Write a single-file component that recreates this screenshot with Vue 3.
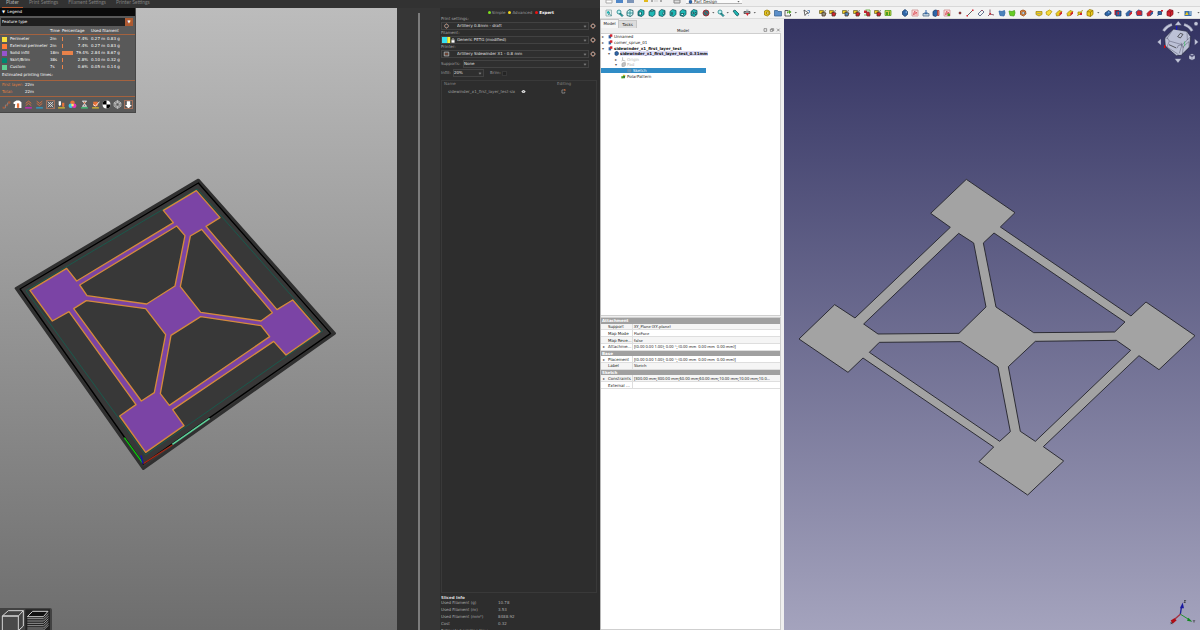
<script setup>
const tabs = ['Plater', 'Print Settings', 'Filament Settings', 'Printer Settings']
const features = [
  { name: 'Perimeter', color: '#f8e03c', time: '2m', share: 7.4, m: '0.27 m', g: '0.83 g' },
  { name: 'External perimeter', color: '#ff7d38', time: '2m', share: 7.4, m: '0.27 m', g: '0.83 g' },
  { name: 'Solid infill', color: '#9654cc', time: '18m', share: 79.4, m: '2.84 m', g: '8.67 g' },
  { name: 'Skirt/Brim', color: '#00876e', time: '38s', share: 2.8, m: '0.10 m', g: '0.32 g' },
  { name: 'Custom', color: '#5ed194', time: '7s', share: 0.6, m: '0.05 m', g: '0.14 g' },
]
const sliced = [
  ['Used Filament (g)', '10.78'],
  ['Used Filament (m)', '3.53'],
  ['Used Filament (mm³)', '8488.92'],
  ['Cost', '0.32'],
  ['Estimated printing time:', ''],
]
const presets = [
  { id: 'print', label: 'Print settings:', value: 'Artillery 0.8mm - draft', kind: 'gear' },
  { id: 'filament', label: 'Filament:', value: 'Generic PETG (modified)', kind: 'spool' },
  { id: 'printer', label: 'Printer:', value: 'Artillery Sidewinder X1 - 0.8 mm', kind: 'printer' },
]

/* Icon layers: [path, fill, stroke], on a 16 x 16 grid. */
const O = '#e8733a'
const legendIcons = [
  { n: 'Travel', p: [['M2 14h4V9h4V5h4', 'none', '#8c8c8c'], ['M1 12h4v3H1z M11 2h4v4h-4z M7 8h3v3H7z', '#a85a3a']] },
  { n: 'Wipe', p: [['M1 4l5-3h5l4 3v10H3l1-7H1z', '#fff'], ['M7 6h4v8H7z', O]] },
  { n: 'Retractions', p: [['M3 6l5-4 5 4M3 10l5-4 5 4', 'none', O], ['M2 13h12v2H2z', '#e01fd0']] },
  { n: 'Deretractions', p: [['M3 2l5 4 5-4M3 6l5 4 5-4', 'none', O], ['M2 13h12v2H2z', '#28a8d8']] },
  { n: 'Seams', on: true, p: [['M3 3l10 10M13 3L3 13M8 4l4 4-4 4-4-4z', 'none', '#ddd']] },
  { n: 'Tool changes', p: [['M3 2h4v6l-2 3-2-3z', '#fff'], ['M9 5h4v6l-2 2-2-2z', O], ['M2 13h12v2H2z', '#e8c528']] },
  { n: 'Color changes', p: [['M8 1a4 4 0 1 1 0 8 4 4 0 1 1 0-8z', O], ['M5 6a4 4 0 1 1 0 8 4 4 0 1 1 0-8z', '#37c5e8'], ['M11 6a4 4 0 1 1 0 8 4 4 0 1 1 0-8z', '#e838b8'], ['M6 7h4v4H6z', '#f5ec6a']] },
  { n: 'Print pauses', p: [['M4 2h8M4 11h8M5 2l6 9M11 2l-6 9', 'none', '#fff'], ['M6 4h4l-2 3z', O], ['M2 13h12v2H2z', '#3ddb7c']] },
  { n: 'Custom G-codes', p: [['M4 3h8v8H4z', O], ['M4 8l4 3 7-8', 'none', '#fff'], ['M2 13h12v2H2z', '#e8c528']] },
  { n: 'Center of gravity', p: [['M8 1a7 7 0 1 1 0 14A7 7 0 1 1 8 1z', '#fff'], ['M8 1v7H1a7 7 0 0 1 7-7zM8 15V8h7a7 7 0 0 1-7 7z', '#000']] },
  { n: 'Shells', p: [['M8 1l6 4v6l-6 4-6-4V5zM8 1v4M2 5l3 2M14 5l-3 2M8 15v-4M5 5h6v6H5z', 'none', '#ccc']] },
  { n: 'Tool marker', on: true, p: [['M5 2h6v7h3l-6 6-6-6h3z', '#fff']] },
]

const T = '#1fb8b5', D = '#0d4f55', R = '#d1232f', Y = '#ecc91f', B = '#2f66a8', G = '#49a01c'
const box = 'M2 5l5-4 7 2v8l-5 4-7-2z'
const view = extra => [[box, T, D], [extra, '#d9ffff', D]]
const solid = (c, s) => [[box, c, s], ['M2 5l7 1 5-3M9 6v9', 'none', s]]
const lens = [['M6 2a4 4 0 1 1 0 8 4 4 0 1 1 0-8z', '#bdf1f1', '#137b80'], ['M9 8l5 5-2 2-5-5z', T, D]]
const sketch = c => [['M1 3h8v6H1z', Y, '#6d6a3a'], ['M6 6l8 2-2 6H6z', c, '#4d3420'], ['M10 5l4-2', 'none', '#555']]
const paper = c => [['M2 2h12v12H2z', '#fbdede', '#c98a8a'], ['M5 11l2-6 5 3z', 'none', R], ['M9 9h5v5H9z', c]]
const slant = (a, b, s) => [['M2 9l6-6 6 2-5 8-6 1z', a, s], ['M9 8l5-3v4l-5 5z', b]]
const toolGroups = [
  { w: 93, gap: 4, icons: [
    [['M2 2h11v12H2z', '#e3eeee', '#8aa5a5'], ['M6 5a3 3 0 1 1 0 6M9 10l4 4', 'none', '#137b80'], ['M4 5h4v4H4z', T]], lens,
    [[box, '#d0f6f5', D], ['M8 1v14M2 8h12', 'none', '#137b80']], view('M4 6h5v6H4z'), view('M4 4l4-2 4 1-4 2z'),
    view('M10 7l3-2v5l-3 2z'), view('M5 7h2v4H5z'), view('M4 9h6l-2 4H4z'), view('M4 6h3v4H4z M10 7h2v4h-2z')] },
  { w: 27, gap: 3, icons: [[['M8 2a6 6 0 1 1 0 12A6 6 0 1 1 8 2z', '#2f7176', '#a51520'], ['M4 4l8 8', 'none', R]], 0, lens, 0] },
  { w: 24, gap: 7, icons: [[['M2 4l4-2 8 8-3 4-3-2z', T, D]], [['M2 5h12v4H2z', '#8b9499', '#444'], ['M5 8h7l-3 6z', R], ['M6 1h5v4H6z', '#b9c0c4']], 0] },
  { w: 34, gap: 6, icons: [[['M3 4l5-2 5 2 1 6-5 4-6-2z', Y, '#917600'], ['M7 6h5v4H7z', '#fff3a3', '#917600']], [['M1 3h6l1 2h7v9H1z', '#5c8fc9', '#35608f']], [['M9 3H2v11h11v-4', 'none', '#333'], ['M6 10V5h4V2l5 4-5 4V7H8z', G]], 0] },
  { w: 8, gap: 8, icons: [[['M2 2l2 11 3-4 4-1z', '#fff', '#333'], ['M9 3h4v4l-2 2M11 12v1', 'none', B]]] },
  { w: 18, gap: 5, icons: [sketch('#8a8a7c'), sketch(R)] },
  { w: 50, gap: 8, icons: [sketch('#4c85b8'), sketch(R), [['M2 3h6v5H2z', R], ['M5 2h9v10H2', 'none', G], ['M6 6h6l2 8H8z', R, '#733']], sketch(R), [['M2 3h12v10H2z', '#cfc94b', G], ['M4 6h4v6H4zM10 5h2v8h-2z', G]]] },
  { w: 50, gap: 5, icons: [[['M3 5l5-4 5 4v6l-5 4-5-4z', B, '#193b66'], ['M8 6l4-2v5z', '#75a8dc']], paper('#f2b6b6'), [['M2 9h12v5H2z', '#c3d2df', '#4a6888'], ['M7 2h2v5h3l-4 4-4-4h3z', B]], [['M2 5l4-3 5 1v9l-4 3-5-2z', B, '#193b66'], ['M11 3h3v10h-3z', '#ef9b79', '#a33']], paper(G)] },
  { w: 71, gap: 8, icons: [[['M8 6a2 2 0 1 1 0 4 2 2 0 1 1 0-4z', R, '#522']], [['M2 14L14 2', 'none', '#333'], ['M1 12h3v3H1zM12 1h3v3h-3z', R]], [['M10 2l4 4-8 8-4-4z', 'none', '#384b70'], ['M10 2v2', 'none', R]], [['M6 1v9l8 2M6 10l-4 4', 'none', '#663344'], ['M5 8h3v3H5z', R]], [['M2 4l6 1 5-2 1 5-2 6-8-1z', '#4a82ba', B]], [['M2 4l6 1 5-2 1 5-2 6-8-1z', '#65cc22', G]], [['M3 4l5-2 5 2 1 6-5 4-6-3z', '#f28b35', '#8c420c'], ['M6 6h5v4H6z', '#fff', '#567']]] },
  { w: 65, gap: 4, icons: [[['M2 5h12v6l-6 3-6-3z', Y, '#a08810'], ['M4 9h8', 'none', '#999']], [['M2 6l7-4 5 3-6 8-5-2z', '#f7db40', '#b39400']], slant(Y, R, '#a08810'), slant(Y, R, '#a08810'), [['M2 13c7 0 4-8 12-10', 'none', '#a38a00'], ['M4 6h7v5H4z', Y, '#a38a00'], ['M8 8h4v4H8z', R]], solid(Y, '#917600'), 0] },
  { w: 76, gap: 4, icons: [[['M2 8l7-5 5 3v4l-7 4-5-2z', B, '#173962'], ['M8 5l4 1-3 3z', '#83b4e5']], [['M1 2h9v10H1z', R], ['M4 4h10v10H4z', B, '#173962'], ['M7 6h3v5H7z', R]], slant(B, R, '#234d86'), [['M2 6l5-4 7 2v9H4z', R, '#234d86']], slant(R, B, '#8a1c28'), [['M2 13c7 0 4-8 12-10', 'none', B], ['M4 5h7v6H4z', B, '#173962'], ['M10 2h4v3h-4z', R]], solid(R, '#8a101c'), 0] },
  { w: 16, gap: 0, icons: [[['M1 4h14v10H1z', '#3a6da8'], ['M2 12l4-7 3 7z', Y], ['M10 4h4v8h-3z', '#80a9cd']], 0] },
]
const tree = [
  { t: 'Unnamed', d: 0, a: '▸', k: 'doc' },
  { t: 'corner_sprue_01', d: 0, a: '▸', k: 'doc' },
  { t: 'sidewinder_x1_first_layer_test', d: 0, a: '▾', k: 'doc', bold: true },
  { t: 'sidewinder_x1_first_layer_test_0.31mm', d: 1, a: '▾', k: 'body', bold: true, active: true },
  { t: 'Origin', d: 2, a: '▸', k: 'origin', dim: true },
  { t: 'Pad', d: 2, a: '▾', k: 'pad', dim: true },
  { t: 'Sketch', d: 3, a: '', k: 'sketch', selected: true },
  { t: 'PolarPattern', d: 2, a: '', k: 'polar' },
]
const treeIcons = {
  doc: [['M2 4h8v10H2z', B], ['M6 1h8v8H6z', R]],
  body: [['M3 4l6-3 5 4v6l-6 4-5-3z', B, '#193b66']],
  origin: [['M5 1v9l9 3M5 10l-4 4', 'none', '#777']],
  pad: [['M3 5l4-3h7v9l-4 3H3z', '#aaa', '#777']],
  sketch: [['M2 4h11v9H2z', '#5b9bc6', '#7e8a94']],
  polar: [['M1 7h8v7H1z', G], ['M6 2l8 3-2 9-5-3z', '#2f7a32'], ['M7 2h5v4H7z', Y]],
}
const props = [
  { h: 'Attachment' },
  { k: 'Support', v: 'XY_Plane (XY-plane)' },
  { k: 'Map Mode', v: 'FlatFace' },
  { k: 'Map Reve...', v: 'false' },
  { k: 'Attachme...', v: '[(0.00 0.00 1.00); 0.00 °; (0.00 mm  0.00 mm  0.00 mm)]', a: true },
  { h: 'Base' },
  { k: 'Placement', v: '[(0.00 0.00 1.00); 0.00 °; (0.00 mm  0.00 mm  0.00 mm)]', a: true },
  { k: 'Label', v: 'Sketch' },
  { h: 'Sketch' },
  { k: 'Constraints', v: '[300.00 mm;300.00 mm;60.00 mm;60.00 mm;10.00 mm;10.00 mm;10.0...', a: true },
  { k: 'External ...', v: '' },
]
</script>

<template>
  <main class="desktop">
    <section class="slicer" aria-label="Slicer">
      <nav class="tabs">
        <a v-for="(t, i) in tabs" :key="t" href="#" :class="{ on: i === 0 }">{{ t }}</a>
      </nav>
      <div class="work">
        <div class="bed">
          <svg class="scene" viewBox="0 0 397 622" aria-label="Sliced model">
            <g transform="translate(0 162) scale(.33333)" stroke-linejoin="round">
              <path d="M595 30L1004 490 430 896 48 355z" fill="#373737" stroke="#303030" stroke-width="8" />
              <path d="M595 39L992 490 430 882 60 357z" fill="#383838" stroke="#000" stroke-width="4" />
              <path d="M592 57L968 483 436 855 78 362z" fill="none" stroke="#19594c" stroke-width="3" />
              <path fill="#7b44a5" stroke="#d48a3c" stroke-width="4" fill-rule="evenodd" d="M589 62L660 143 618 169 831 419 878 390 960 484 858 555 821 514 518 719 552 767 437 847 359 738 408 704 207 425 157 453 90 361 200 295 230 333 520 158 490 121z M239 345L530 168 555 197 525 348 440 402 261 377z M571 198L605 178 817 428 783 453 602 427 541 350z M602 440L783 467 809 500 508 706 481 671 513 496z M259 392L437 416 497 494 463 668 424 693 221 416z" />
              <path d="M517 823L629 745" stroke="#5ed19a" stroke-width="5" />
              <path d="M430 881L517 825" stroke="#a02a18" stroke-width="4" />
              <path d="M428 879L373 803" stroke="#12c212" stroke-width="4" />
              <path d="M429 881L423 856" stroke="#1515a8" stroke-width="5" />
            </g>
          </svg>
          <aside class="legend">
            <h2><span>▼</span> Legend</h2>
            <div class="combo">
              <select aria-label="View type"><option>Feature type</option></select>
              <span class="drop">▼</span>
            </div>
            <table>
              <colgroup><col class="c1"><col class="c2"><col class="c3"><col class="c4"><col class="c5"><col class="c6"><col></colgroup>
              <thead><tr><th></th><th></th><th>Time</th><th colspan="2">Percentage</th><th colspan="2">Used filament</th></tr></thead>
              <tbody>
                <tr v-for="f in features" :key="f.name">
                  <td><i class="swatch" :style="{ background: f.color }"></i></td>
                  <td>{{ f.name }}</td><td>{{ f.time }}</td>
                  <td><i class="bar" :style="{ width: f.share + '%' }"></i></td>
                  <td class="num">{{ f.share }}%</td><td>{{ f.m }}</td><td>{{ f.g }}</td>
                </tr>
              </tbody>
            </table>
            <p class="est">Estimated printing times:</p>
            <dl><dt>First layer:</dt><dd>22m</dd><dt>Total:</dt><dd>22m</dd></dl>
            <div class="options">
              <button v-for="b in legendIcons" :key="b.n" :class="{ on: b.on }" :aria-label="b.n">
                <svg viewBox="0 0 16 16"><path v-for="(l, i) in b.p" :key="i" :d="l[0]" :fill="l[1]" :stroke="l[2] || 'none'" stroke-width="1.5" /></svg>
              </button>
            </div>
          </aside>
          <svg class="modes3d" viewBox="0 24 156 66" aria-label="View switch">
            <path d="M0 24h150q6 0 6 6v60H0z" fill="#424242" /><path d="M76 28h74v62H76z" fill="#222" />
            <path d="M7 48h48v44H7z" fill="#494949" /><path d="M7 48l18-16h45L55 48zM7 48v44M55 48v44M70 32v46L57 90M7 48h48" fill="none" stroke="#d5d5d5" stroke-width="3" />
            <path d="M82 50l16-16h46l-14 16z" fill="#111" stroke="#ccc" stroke-width="3" />
            <path d="M82 56h49l14-14M82 63h49l14-14M82 70h49l14-14M82 77h49l14-14M82 84h49l14-14M82 90h49l14-14" fill="none" stroke="#959595" stroke-width="3" />
          </svg>
        </div>
        <div class="layers"><div class="track"></div></div>
        <div class="settings">
          <div class="levels">
            <button><i class="dot green"></i>Simple</button>
            <button><i class="dot yellow"></i>Advanced</button>
            <button class="on"><i class="dot red"></i>Expert</button>
          </div>
          <div v-for="p in presets" :key="p.id" class="preset">
            <label :for="p.id">{{ p.label }}</label>
            <div class="line">
              <div class="field">
                <svg class="pic" viewBox="0 0 24 16">
                  <template v-if="p.kind === 'gear'"><circle cx="12" cy="8" r="5" fill="none" stroke="#aaa" stroke-width="2" /><path d="M12 1v3M12 12v3M5 8h3M16 8h3" stroke="#c5714d" stroke-width="2" /></template>
                  <template v-else-if="p.kind === 'spool'"><path d="M0 0h14v16H0z" fill="#35dff0" /><path d="M14 0h8v16h-8z" fill="#f3f13a" /></template>
                  <template v-else><path d="M6 3h12v10H6z" fill="none" stroke="#ccc" stroke-width="2" /><path d="M8 8h8" stroke="#d46a42" stroke-width="2" /></template>
                </svg>
                <svg v-if="p.kind === 'spool'" class="lock" viewBox="0 0 12 16"><path d="M1 7h10v8H1z" fill="#fff" /><path d="M3 7V4q3-5 6 0v3" fill="none" stroke="#fff" stroke-width="2" /></svg>
                <select :id="p.id" :class="{ wide: p.kind !== 'spool' }"><option>{{ p.value }}</option></select>
                <span class="chev"></span>
              </div>
              <button class="gear" aria-label="Edit preset"><svg viewBox="0 0 16 16"><circle cx="8" cy="8" r="5" fill="none" stroke="#ccc" stroke-width="2" /><path d="M8 1v3M8 12v3M1 8h3M12 8h3" stroke="#d87b55" stroke-width="3" /></svg></button>
            </div>
          </div>
          <div class="line supports"><label for="sup">Supports:</label><div class="field"><select id="sup"><option>None</option></select><span class="chev"></span></div></div>
          <div class="line infill"><label for="inf">Infill:</label><div class="field"><select id="inf"><option>20%</option></select><span class="chev"></span></div><label for="brim" class="brim">Brim:</label><input id="brim" type="checkbox"></div>
          <div class="objects">
            <div class="head"><span>Name</span><span>Editing</span></div>
            <div class="obj">
              <span class="fname">sidewinder_x1_first_layer_test-six</span>
              <svg viewBox="0 0 16 16"><path d="M1 8q7-10 14 0-7 10-14 0z" fill="#e5e5e5" /><circle cx="8" cy="8" r="2" fill="#777" /></svg>
              <svg class="edit" viewBox="0 0 16 16"><path d="M9 3H3v10h9V9" fill="none" stroke="#aaa" stroke-width="2" /><path d="M9 1h5v5h-2z" fill="#e8733a" /></svg>
            </div>
          </div>
          <div class="sliced">
            <h3>Sliced Info</h3>
            <dl><template v-for="s in sliced" :key="s[0]"><dt>{{ s[0] }}</dt><dd>{{ s[1] }}</dd></template></dl>
          </div>
        </div>
      </div>
    </section>

    <section class="cad" aria-label="CAD">
      <div class="filebar">
        <svg class="files" viewBox="0 0 86 7"><path d="M6 0h6v3H6z" fill="#fff" stroke="#aaa" /><path d="M16 0h7v3h-7z" fill="#4e86c8" /><path d="M27 0h7v3h-7z" fill="#7d95b8" /><path d="M44 0h4v2h-4z" fill="#e2b91c" /><path d="M51 1h2M60 1h2" stroke="#666" /><path d="M54 0h4v2h-4z" fill="#ddd" /><path d="M74 0h6v3h-6z" fill="#ddd" stroke="#888" /></svg>
        <div class="bench"><svg viewBox="0 0 16 16"><path d="M2 3l6-3 6 3v8l-6 4-6-4z" fill="#2f66a8" stroke="#193b66" /></svg><select aria-label="Workbench"><option>Part Design</option></select><i class="caret"></i></div>
      </div>
      <div class="toolbar">
        <template v-for="(g, gi) in toolGroups" :key="gi">
          <div class="group" :style="{ flexGrow: g.w }">
            <template v-for="(ic, i) in g.icons" :key="i">
              <button v-if="ic" aria-label="Tool"><svg viewBox="0 0 16 16"><path v-for="(l, j) in ic" :key="j" :d="l[0]" :fill="l[1]" :stroke="l[2] || 'none'" stroke-width="1.5" /></svg></button>
              <i v-else class="caret"></i>
            </template>
          </div>
          <span :style="{ flexGrow: g.gap }"></span>
        </template>
      </div>
      <div class="cadwork">
        <div class="combi">
          <div class="ptabs"><button class="on">Model</button><button>Tasks</button></div>
          <div class="ptitle"><span>Model</span>
            <svg viewBox="0 0 54 12"><path d="M3 2h8v8H3zM22 4h7v6h-7zM25 4V2h7v6h-3M42 2l8 8M50 2l-8 8" fill="none" stroke="#444" stroke-width="1.5" /></svg>
          </div>
          <div class="treebox">
            <ul>
              <li v-for="n in tree" :key="n.t" :class="['d' + n.d, { dim: n.dim, bold: n.bold, selected: n.selected }]">
                <span class="arrow">{{ n.a }}</span>
                <svg viewBox="0 0 16 16"><path v-for="(l, j) in treeIcons[n.k]" :key="j" :d="l[0]" :fill="l[1]" :stroke="l[2] || 'none'" stroke-width="2" /></svg>
                <span :class="{ active: n.active }">{{ n.t }}</span>
              </li>
            </ul>
          </div>
          <div class="propbox">
            <table>
              <colgroup><col class="pk"><col></colgroup>
              <tbody>
                <tr v-for="(p, i) in props" :key="i" :class="{ alt: i % 2 }">
                  <th v-if="p.h" colspan="2">{{ p.h }}</th>
                  <template v-else><td><span class="arrow">{{ p.a ? '▸' : '' }}</span>{{ p.k }}</td><td>{{ p.v }}</td></template>
                </tr>
              </tbody>
            </table>
          </div>
        </div>
        <div class="view">
          <svg class="scene" viewBox="0 0 416 611" aria-label="Sketch body">
            <g transform="translate(6 151) scale(.33333)">
              <path fill="#a3a3a3" stroke="#2c2c34" stroke-width="3" fill-rule="evenodd" d="M529 28L675 128 631 171 1023 438 1068 396 1215 497 1107 599 1047 557 760 830 821 873 713 975 567 875 611 831 219 564 174 607 27 507 134 404 195 444 481 172 422 130z M221 462L506 190 551 219 588 411 507 490 264 492z M580 219L612 189 1005 456 974 486 731 488 618 411z M736 514L979 511 1022 541 736 814 691 784 655 590z M268 517L512 515 624 591 661 785 629 814 238 547z" />
            </g>
          </svg>
          <svg class="nav" viewBox="501 57 129 138" aria-label="Navigation cube">
            <g fill="#c3c7db" stroke="#3c3e60" stroke-width="1">
              <path d="M554 76l11-13 10 13zM554 176h20l-10 13zM513 116v20l-11-10zM614 116v20l11-10z" />
              <path d="M517 91q10-16 28-21l2 7q-13 4-23 18zM583 70q18 5 27 21l-7 4q-7-13-22-18z" />
              <circle cx="618" cy="71" r="6" /><path d="M606 161l9 5v10l-9 5-9-5v-10zM597 166l9 4 9-4M606 170v10" />
              <path d="M550 87l41 7 11 16-3 31-25 25-15 1-33-28-2-25z" fill="#bcc1d6" stroke="#20223a" stroke-width="2" />
              <path d="M550 87l-18 27 6 9 38 11 16-14-1-26M524 114l9 1M526 139l5 2 31 20 5 6M531 141l7-18M576 134l-8 26M576 134l-3-6M592 120l10-10M580 139l17-14v18l-20 19zM562 144a9 9 0 1 1 18 0" fill="none" stroke="#20223a" stroke-width="1" />
              <path d="M563 110l8-10 8 3-8 11z M537 134l22 10" fill="none" stroke="#222" stroke-width="2" />
            </g>
            <path d="M560 78v12" stroke="#1515d0" stroke-width="3" /><path d="M524 136v8" stroke="#e00" stroke-width="4" /><path d="M584 124v15" stroke="#3bc25f" stroke-width="2" />
          </svg>
          <svg class="axes" viewBox="75 25 105 95" aria-label="Axis cross">
            <path d="M121 73l4-25" stroke="#222299" stroke-width="4" /><path d="M120 55l8-17 4 17z" fill="#1a1aa0" />
            <path d="M121 73l24 15" stroke="#239330" stroke-width="3" /><path d="M145 84l12 12-16-3z" fill="#128820" />
            <path d="M121 73L103 89" stroke="#a43040" stroke-width="4" /><path d="M92 92l11-7 7 6-12 11z" fill="#b00d15" />
            <path d="M132 32h5l-5 6h5M159 91l3 3 3-3M162 94v4M92 97l5 6M97 97l-5 6" fill="none" stroke="#222" stroke-width="2" />
          </svg>
        </div>
      </div>
    </section>
  </main>
</template>

<style>
html, body { margin: 0; height: 100%; }
#app { height: 100%; }
</style>
<style scoped>
* { box-sizing: border-box; }
.desktop { display: grid; grid-template-columns: 1fr 1fr; height: 100vh; min-height: 200px; overflow: hidden; font: 4px/6px "DejaVu Sans", sans-serif; }
svg { display: block; }
button, select, input { font: inherit; color: inherit; background: none; border: 0; padding: 0; margin: 0; appearance: none; line-height: inherit; }
h2, h3, p, dl, dd, ul { margin: 0; padding: 0; font-size: inherit; }
i { display: block; }

.slicer { display: flex; flex-direction: column; min-width: 0; min-height: 0; background: #2d2d2d; color: #aaa; }
.tabs { display: flex; gap: 10px; height: 8px; flex: none; overflow: hidden; background: #323232; font: 5px/5px Lato, sans-serif; padding-left: 2px; }
.tabs a { color: #7e7e7e; text-decoration: none; height: 8px; }
.tabs a.on { color: #b0b0b0; border-bottom: 1px solid #b2562e; padding: 0 4px; margin-right: -4px; }
.work { flex: 1; min-height: 0; display: grid; grid-template-columns: 1fr 43px 160px; }
.bed { position: relative; background: linear-gradient(#bcbcbc, #6e6e6e); min-width: 0; overflow: hidden; }
.scene { position: absolute; inset: 0; width: 100%; height: 100%; }
.legend { position: absolute; left: 0; top: 0; width: 136px; padding-bottom: 3px; background: #595959; border: 1px solid #474747; border-width: 0 1px 1px 0; color: #fff; }
.legend h2 { background: #0a0a0a; height: 8px; line-height: 8px; padding-left: 2px; font-weight: 400; }
.legend h2 span { margin-right: 1px; }
.combo { display: flex; margin: 2px 2px 2px 1px; height: 8px; background: #202020; }
.combo select { flex: 1; padding-left: 1px; line-height: 8px; }
.drop { width: 8px; line-height: 8px; text-align: center; background: #ad5a31; color: #fff; }
.legend table { width: 100%; table-layout: fixed; border-collapse: separate; border-spacing: 0; }
.legend th { font-weight: 400; text-align: left; border-bottom: 1px solid #a4623f; }
.legend th, .legend td { padding: 0; height: 7px; line-height: 6px; white-space: nowrap; }
.legend tbody td { padding-top: 1px; }
.c1 { width: 10px; } .c2 { width: 40px; } .c3 { width: 12px; } .c4 { width: 14px; } .c5 { width: 15px; } .c6 { width: 16px; }
.legend td.num { text-align: right; padding-right: 3px; }
.swatch { width: 5px; height: 5px; margin-left: 2px; }
.bar { height: 4px; min-width: 1px; background: #e8824a; }
.est { padding: 2px 0 2px 2px; border-bottom: 1px solid #a4623f; }
.legend dl { display: grid; grid-template-columns: 23px 1fr; padding: 0 2px 1px; line-height: 7px; border-bottom: 1px solid #a4623f; }
.legend dt { color: #e5803f; }
.options { display: flex; justify-content: space-between; padding: 3px 2px 0; }
.options button { width: 9px; height: 9px; }
.options button.on { outline: 1px solid #a4705a; outline-offset: -1px; }
.modes3d { position: absolute; left: 0; bottom: 0; width: 52px; height: 22px; }
.layers { background: #363636; display: flex; padding: 5px 20px 0 21px; }
.track { flex: 1; background: #7c7c7c; }

.settings { display: flex; flex-direction: column; padding: 2px 3px 0 1px; min-width: 0; min-height: 0; overflow: hidden; background: #2d2d2d; }
.levels { display: flex; justify-content: flex-end; gap: 3px; padding-right: 43px; line-height: 5px; height: 5px; color: #9a9a9a; }
.levels button { display: flex; align-items: center; gap: 1px; }
.levels .on { color: #fff; font-weight: 700; }
.dot { width: 3px; height: 3px; border-radius: 50%; }
.green { background: #7edc1c; } .yellow { background: #f4d91c; } .red { background: #e81212; }
.preset { height: 14px; color: #a5a5a5; }
.preset:nth-child(2) { margin-top: 1px; }
.preset label { display: block; height: 6px; }
.line { display: flex; align-items: center; }
.field { position: relative; flex: 1; display: flex; align-items: center; height: 8px; background: #2f2f2f; border: 1px solid #424242; color: #e0e0e0; }
.field select { flex: 1; min-width: 0; line-height: 6px; height: 6px; }
.pic { width: 9px; height: 6px; }
.lock { width: 4px; height: 5px; margin: 0 2px 0 0; }
select.wide { padding-left: 6px; }
.chev { width: 2px; height: 2px; margin: 0 2px 1px 0; border: solid #777; border-width: 0 1px 1px 0; transform: rotate(45deg); }
.gear { width: 8px; display: flex; justify-content: center; }
.gear svg { width: 6px; height: 6px; }
.supports { margin: 2px 8px 0 0; }
.supports label, .infill label { width: 22px; color: #9a9a9a; }
.infill { margin-top: 1px; }
.infill label:first-child { width: 12px; }
.infill .field { flex: none; width: 31px; }
.infill label.brim { width: 12px; margin-left: 6px; }
.infill input { width: 5px; height: 5px; border: 1px solid #383838; background: #242424; }
.objects { flex: 1; margin-top: 3px; border: 1px solid #393939; margin-bottom: 2px; padding: 0 1px; }
.head { display: flex; justify-content: space-between; padding: 0 24px 0 1px; height: 7px; color: #858585; }
.obj { display: flex; align-items: center; gap: 3px; padding-left: 5px; height: 7px; color: #9f9f9f; }
.obj svg { width: 5px; height: 5px; }
.obj .edit { margin-left: 32px; }
.fname { width: 70px; white-space: nowrap; }
.sliced { height: 35px; overflow: hidden; flex: none; }
.sliced h3 { line-height: 5px; color: #ddd; }
.sliced dl { display: grid; grid-template-columns: 57px 1fr; grid-auto-rows: 7px; color: #ababab; white-space: nowrap; }

.cad { display: flex; flex-direction: column; min-width: 0; min-height: 0; background: #efefef; color: #1a1a1a; }
.filebar { display: flex; height: 7px; overflow: hidden; border-bottom: 1px solid #d8d8d8; }
.files { width: 86px; height: 7px; flex: none; }
.bench { display: flex; width: 56px; height: 4px; align-items: center; border-bottom: 1px solid #b5b5b5; line-height: 4px; background: #fafafa; padding: 0 2px; gap: 1px; }
.bench svg { width: 5px; height: 4px; }
.bench select { flex: 1; height: 5px; line-height: 4px; }
.toolbar { display: flex; align-items: center; height: 12px; padding-left: 5px; flex: none; background: #f3f3f3; border-bottom: 1px solid #dcdcdc; }
.toolbar > span { flex: 0 1 0; }
.group { display: flex; align-items: center; justify-content: space-between; flex: 0 1 0; min-width: 0; }
.group button { width: 8px; flex: none; }
.group svg { width: 8px; height: 8px; }
.caret { width: 3px; height: 2px; background: #666; clip-path: polygon(0 0, 100% 0, 50% 100%); }
.cadwork { flex: 1; min-height: 0; display: grid; grid-template-columns: 184px 1fr; }
.combi { display: flex; flex-direction: column; min-height: 0; padding-right: 3px; border-left: 1px solid #b8b8b8; }
.ptabs { display: flex; height: 9px; align-items: end; }
.ptabs button { height: 8px; width: 18px; background: #dcdcdc; border: 1px solid #c6c6c6; border-width: 1px 1px 0 0; }
.ptabs .on { height: 9px; background: #f6f6f6; }
.ptitle { position: relative; height: 5px; line-height: 5px; text-align: center; }
.ptitle span { padding-right: 16px; }
.ptitle svg { position: absolute; right: 0; top: 0; width: 18px; height: 4px; }
.treebox { flex: 1; min-height: 0; background: #fff; border: 1px solid #cfcfcf; border-left: 0; overflow: hidden; }
.treebox ul { list-style: none; display: grid; grid-auto-rows: 1fr; height: 45px; }
.treebox li { display: flex; align-items: center; gap: 1px; white-space: nowrap; width: 105px; line-height: 5px; padding-left: 1px; }
.treebox li svg { width: 5px; height: 5px; flex: none; }
.arrow { display: inline-block; width: 5px; flex: none; color: #555; }
.treebox .d1 { padding-left: 7px; } .treebox .d2 { padding-left: 14px; } .treebox .d3 { padding-left: 20px; }
.dim { color: #b7b7b7; }
.dim svg { opacity: .7; }
.bold { font-weight: 700; color: #111; }
.active { background: #dcdcf6; }
.selected { background: #308cc6; color: #fff; }
.propbox { height: 313px; flex: none; background: #fff; border: 1px solid #cfcfcf; border-left: 0; margin-top: 1px; overflow: hidden; }
.propbox table { width: 100%; height: 71px; border-collapse: separate; border-spacing: 0; table-layout: fixed; }
.propbox td, .propbox th { padding: 0; line-height: 5px; white-space: pre; }
.pk { width: 32px; }
.propbox th { background: #a0a0a0; color: #fff; text-align: left; padding-left: 1px; }
.propbox td { border-bottom: 1px solid #dedede; }
.propbox td:first-child { padding-left: 2px; border-right: 1px solid #dedede; }
.propbox td:last-child { padding-left: 1px; font-family: "Noto Sans", sans-serif; }
.alt { background: #f5f5f5; }
.view { position: relative; min-width: 0; background: linear-gradient(#333362, #a4a3bd); overflow: hidden; }
.nav { position: absolute; right: 0; top: 0; width: 43px; height: 46px; }
.axes { position: absolute; right: 0; bottom: 0; width: 35px; height: 32px; }
</style>
